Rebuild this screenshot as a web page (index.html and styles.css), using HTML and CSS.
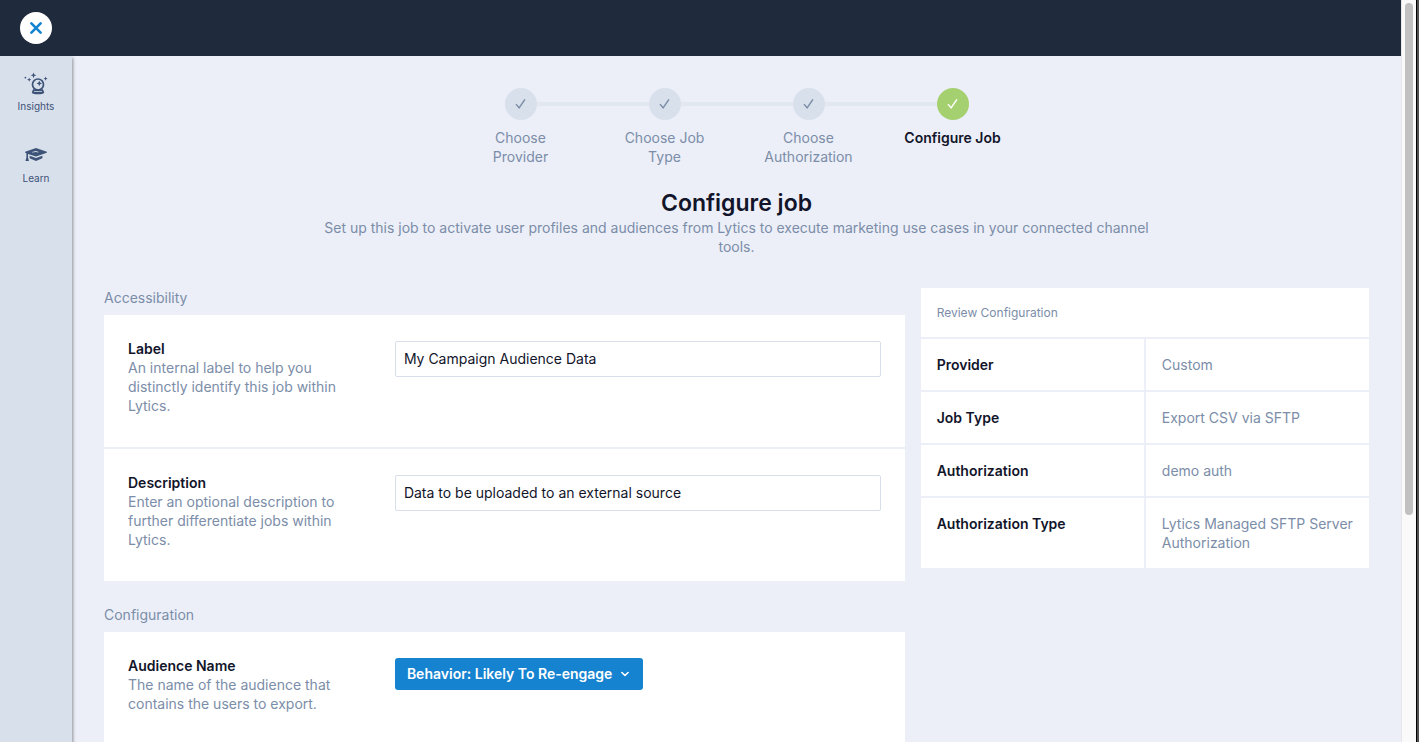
FILE: index.html
```html
<!DOCTYPE html>
<html lang="en">
<head>
<meta charset="UTF-8">
<meta name="viewport" content="width=device-width, initial-scale=1.0">
<title>Configure job</title>
<link rel="stylesheet" href="styles.css">
</head>
<body>

<div class="window">
  <div class="app">
    <header class="topbar">
      <button class="close-btn" type="button" aria-label="Close">
        <svg width="12" height="12" viewBox="0 0 12 12" fill="none" stroke="currentColor" stroke-width="2.6" stroke-linecap="round"><path d="M1.4 1.4l9.2 9.2M10.6 1.4l-9.2 9.2"/></svg>
      </button>
    </header>

    <div class="body">
      <nav class="sidebar">
        <a class="nav-item" href="#insights">
          <svg width="24" height="24" viewBox="0 0 24 24" fill="currentColor">
            <circle cx="14" cy="12.500" r="5.500" fill="none" stroke="currentColor" stroke-width="1.700"/>
            <path d="M15.300 8.600l.8 2 2 .8-2 .8-.8 2-.8-2-2-.8 2-.8z"/>
            <path d="M9 17.200h10l1.200 3.200q0 1.800-6.200 1.800t-6.200-1.800zM10 19v.8h8V19z" fill-rule="evenodd"/>
            <path d="M9.500.4l.8 2.100 2.100.8-2.100.8-.8 2.100-.8-2.100-2.100-.8 2.100-.8zM21.600 4.600l.6 1.500 1.500.6-1.500.6-.6 1.500-.6-1.500-1.500-.6 1.500-.6zM5.200 5.600l.6 1.500 1.500.6-1.500.6-.6 1.500-.6-1.500-1.500-.6 1.500-.6z"/>
            <circle cx="1.400" cy="5.600" r=".9"/>
          </svg>
          <span>Insights</span>
        </a>
        <a class="nav-item" href="#learn">
          <svg width="24" height="24" viewBox="0 0 24 24" fill="currentColor">
            <path d="M12 4l10.800 3.800v1L12 12.600 4 9.900v3.600l1 3.600H1.400l1-3.600V9.300l-1.200-.5v-1zM12 7l-4 1 .3.600 3.700-.5 2 .4.800-.4z" fill-rule="evenodd"/>
            <path d="M5.600 11.700L12 14l6.400-2.300v2.600L12 17l-6.400-2.700z"/>
          </svg>
          <span>Learn</span>
        </a>
      </nav>

      <main class="content">
        <ol class="steps">
          <li class="step">
            <span class="step-dot"><svg width="12" height="12" viewBox="0 0 12 12"><path d="M1.400 6.600l2.700 3.300 5.500-8"/></svg></span>
            <span class="step-name">Choose Provider</span>
          </li>
          <li class="step">
            <span class="step-dot"><svg width="12" height="12" viewBox="0 0 12 12"><path d="M1.400 6.600l2.700 3.300 5.500-8"/></svg></span>
            <span class="step-name">Choose Job Type</span>
          </li>
          <li class="step">
            <span class="step-dot"><svg width="12" height="12" viewBox="0 0 12 12"><path d="M1.400 6.600l2.700 3.300 5.500-8"/></svg></span>
            <span class="step-name">Choose Authorization</span>
          </li>
          <li class="step active">
            <span class="step-dot"><svg width="12" height="12" viewBox="0 0 12 12"><path d="M1.400 6.600l2.700 3.300 5.500-8"/></svg></span>
            <span class="step-name">Configure Job</span>
          </li>
        </ol>

        <div class="intro">
          <h1>Configure job</h1>
          <p>Set up this job to activate user profiles and audiences from Lytics to execute marketing use cases in your connected channel tools.</p>
        </div>

        <div class="columns">
          <form class="form">
            <section class="group">
              <h2>Accessibility</h2>
              <div class="field">
                <div class="field-info">
                  <label for="label">Label</label>
                  <p>An internal label to help you distinctly identify this job within Lytics.</p>
                </div>
                <div class="field-control">
                  <input id="label" type="text" value="My Campaign Audience Data">
                </div>
              </div>
              <div class="field">
                <div class="field-info">
                  <label for="description">Description</label>
                  <p>Enter an optional description to further differentiate jobs within Lytics.</p>
                </div>
                <div class="field-control">
                  <input id="description" type="text" value="Data to be uploaded to an external source">
                </div>
              </div>
            </section>

            <section class="group">
              <h2>Configuration</h2>
              <div class="field">
                <div class="field-info">
                  <label for="audience">Audience Name</label>
                  <p>The name of the audience that contains the users to export.</p>
                </div>
                <div class="field-control">
                  <button id="audience" class="dropdown-btn" type="button" aria-haspopup="listbox">
                    Behavior: Likely To Re-engage
                    <svg width="8" height="8" viewBox="0 0 8 8" fill="none" stroke="currentColor" stroke-width="1.600" stroke-linecap="round" stroke-linejoin="round"><path d="M.9 2.500L4 5.500l3.100-3"/></svg>
                  </button>
                </div>
              </div>
            </section>
          </form>

          <aside class="review">
            <table>
              <thead>
                <tr><th colspan="2">Review Configuration</th></tr>
              </thead>
              <tbody>
                <tr><th scope="row">Provider</th><td>Custom</td></tr>
                <tr><th scope="row">Job Type</th><td>Export CSV via SFTP</td></tr>
                <tr><th scope="row">Authorization</th><td>demo auth</td></tr>
                <tr><th scope="row">Authorization Type</th><td>Lytics Managed SFTP Server Authorization</td></tr>
              </tbody>
            </table>
          </aside>
        </div>
      </main>
    </div>
  </div>

  <div class="scrollbar"><div class="scroll-thumb"></div></div>
</div>

</body>
</html>
```
FILE: styles.css
```css
:root {
  --bg: #eceff8;
  --navy: #1f2b3d;
  --side: #d8e0eb;
  --side-text: #3e5378;
  --text: #12152a;
  --muted: #7b8da8;
  --blue: #1583d0;
  --green: #a5d070;
}

* {
  box-sizing: border-box;
}

body {
  margin: 0;
  font-family: Inter, sans-serif;
  font-size: 14px;
  line-height: 19px;
  color: var(--text);
  background: var(--bg);
}

h1, h2, p, ol {
  margin: 0;
  padding: 0;
}

.window {
  display: flex;
  height: 100vh;
  overflow: hidden;
}

.app {
  flex: 1;
  display: flex;
  flex-direction: column;
  min-width: 0;
}

.topbar {
  flex: none;
  height: 56px;
  padding: 0 20px;
  display: flex;
  align-items: center;
  background: var(--navy);
}

.close-btn {
  display: flex;
  align-items: center;
  justify-content: center;
  width: 32px;
  height: 32px;
  padding: 0;
  border: none;
  border-radius: 50%;
  background: #fff;
  color: var(--blue);
  cursor: pointer;
}

.body {
  flex: 1;
  display: flex;
  min-height: 0;
}

.sidebar {
  flex: none;
  width: 72px;
  background: var(--side);
  box-shadow: 1px 2px 3px rgba(0, 0, 0, 0.4);
  clip-path: inset(0 -6px 0 0);
}

.nav-item {
  display: flex;
  flex-direction: column;
  align-items: center;
  gap: 4px;
  height: 72px;
  padding-top: 16px;
  color: var(--side-text);
  font-size: 10px;
  line-height: 12px;
  text-decoration: none;
}

.content {
  flex: 1;
  min-width: 0;
  padding: 32px;
  overflow: hidden;
}

/* stepper */
.steps {
  display: flex;
  justify-content: center;
  list-style: none;
}

.step {
  position: relative;
  width: 144px;
  padding: 0 22px;
  display: flex;
  flex-direction: column;
  align-items: center;
  gap: 8px;
  text-align: center;
  color: var(--muted);
}

.step + .step::before {
  content: "";
  position: absolute;
  top: 14px;
  right: 50%;
  width: 100%;
  height: 4px;
  background: #e1e8f0;
}

.step-dot {
  position: relative;
  z-index: 1;
  display: flex;
  align-items: center;
  justify-content: center;
  width: 32px;
  height: 32px;
  border-radius: 50%;
  background: var(--side);
}

.step-dot svg {
  fill: none;
  stroke: currentColor;
  stroke-width: 1.5;
  stroke-linecap: round;
  stroke-linejoin: round;
}

.step.active {
  color: var(--text);
  font-weight: 600;
}

.step.active .step-dot {
  background: var(--green);
  color: #fff;
}

.intro {
  max-width: 832px;
  margin: 22px auto 32px;
  text-align: center;
}

.intro h1 {
  font-size: 23px;
  line-height: 30px;
  font-weight: 600;
}

.intro p {
  color: var(--muted);
}

.columns {
  display: flex;
  align-items: flex-start;
  gap: 16px;
}

/* form */
.form {
  flex: 25 1 0;
  min-width: 0;
}

.group {
  margin-bottom: 24px;
}

.group h2 {
  margin-bottom: 8px;
  font-size: 14px;
  font-weight: 400;
  color: var(--muted);
}

.field {
  display: grid;
  grid-template-columns: 1fr 2fr;
  gap: 24px;
  padding: 24px 24px 32px;
  background: #fff;
}

.field + .field {
  margin-top: 2px;
}

.field-info label {
  display: block;
  font-weight: 600;
}

.field-info p {
  color: var(--muted);
}

.field-control {
  padding-top: 2px;
}

.field-control input {
  display: block;
  width: 100%;
  height: 36px;
  padding: 0 8px 2px;
  border: 1px solid #d8deea;
  border-radius: 2px;
  background: #fff;
  color: var(--text);
  font: inherit;
}

.dropdown-btn {
  display: flex;
  align-items: center;
  gap: 9px;
  height: 32px;
  padding: 0 14px 1px 12px;
  border: none;
  border-radius: 3px;
  background: var(--blue);
  color: #fff;
  font: inherit;
  font-weight: 600;
  cursor: pointer;
}

/* review */
.review {
  flex: 14 1 0;
  min-width: 0;
}

.review table {
  width: 100%;
  border-collapse: collapse;
  table-layout: fixed;
}

.review th,
.review td {
  padding: 16px;
  background: #fff;
  text-align: left;
  vertical-align: top;
}

.review th {
  font-weight: 600;
}

.review td {
  border-left: 2px solid var(--bg);
  color: var(--muted);
}

.review tbody tr {
  border-top: 2px solid var(--bg);
}

.review thead th {
  font-size: 12px;
  line-height: 17px;
  font-weight: 400;
  color: var(--muted);
}

/* scrollbar */
.scrollbar {
  flex: none;
  width: 18px;
  padding: 3px 3px 0 3px;
  background: #fafafa;
  border-left: 1px solid #e6e6e8;
  border-right: 2px solid #4d504e;
  box-shadow: inset -1px 0 0 #000;
}

.scroll-thumb {
  width: 8px;
  height: 69vh;
  border-radius: 4px;
  background: #c1c1c1;
}
```
